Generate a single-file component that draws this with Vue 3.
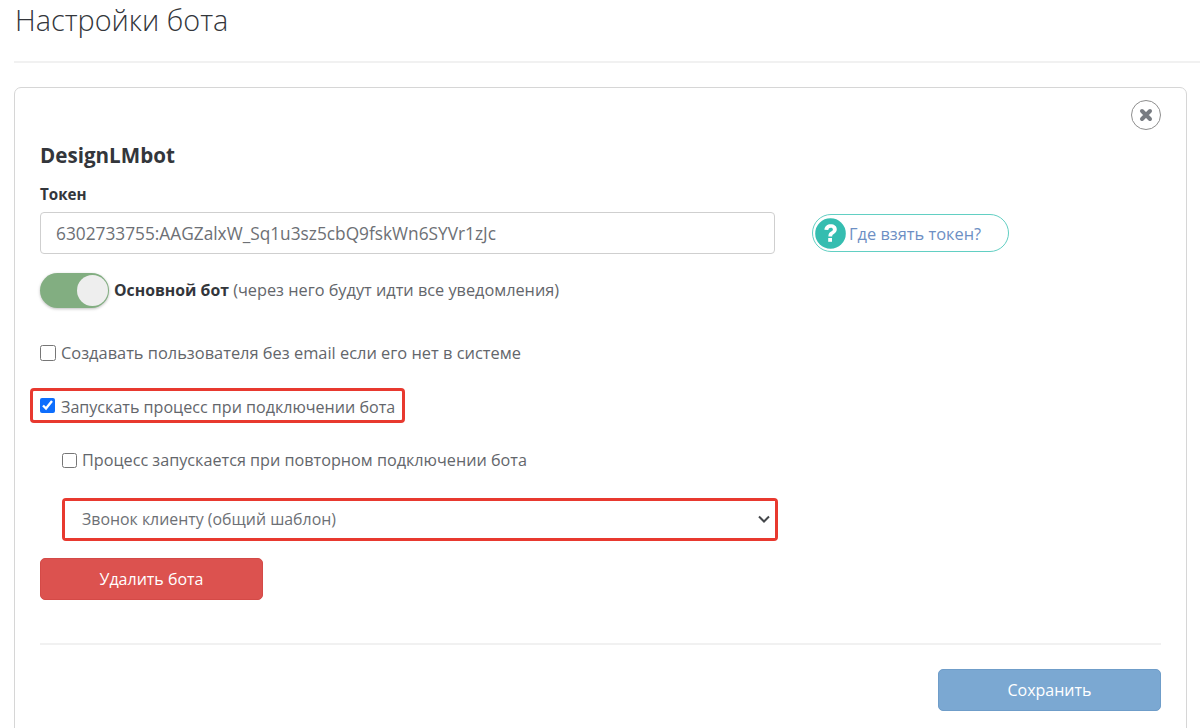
<script setup>
const token = '6302733755:AAGZalxW_Sq1u3sz5cbQ9fskWn6SYVr1zJc'
</script>

<template>
  <div class="page">
    <h1 class="title">Настройки бота</h1>
    <div class="rule"></div>
    <section class="card">
      <button class="close" type="button" aria-label="Закрыть">
        <svg width="14" height="14" viewBox="0 0 14 14"><path d="M3 3l8 8M11 3l-8 8" stroke="#787c82" stroke-width="4" stroke-linecap="round"/></svg>
      </button>
      <h2 class="bot">DesignLMbot</h2>
      <label class="field-label">Токен</label>
      <div class="token-row">
        <input class="token" :value="token" readonly />
        <a class="help">
          <span class="help-icon">
            <svg width="31" height="31" viewBox="0 0 31 31"><circle cx="15.5" cy="15.5" r="15.300" fill="#35bdb0"/><path d="M9.400 11.800c.2-3.600 2.900-5.600 6.300-5.600 3.600 0 6.100 2 6.100 5.100 0 2.400-1.300 3.600-3 4.700-1.200.8-1.600 1.300-1.600 2.500h-3.800c0-2.400.8-3.600 2.400-4.700 1.300-.9 2.100-1.400 2.100-2.400 0-1-.9-1.700-2.100-1.700-1.400 0-2.200.9-2.500 2.200z" fill="#fff"/><rect x="13.200" y="20" width="3.800" height="3.800" fill="#fff"/></svg>
          </span>
          <span>Где взять токен?</span>
        </a>
      </div>
      <div class="switch-row">
        <span class="switch"><span class="knob"></span></span>
        <span class="switch-text"><b>Основной бот</b> (через него будут идти все уведомления)</span>
      </div>
      <label class="check first"><input type="checkbox" />Создавать пользователя без email если его нет в системе</label>
      <label class="check marked"><input type="checkbox" checked /><span class="marked-text">Запускать процесс при подключении бота</span></label>
      <label class="check nested"><input type="checkbox" />Процесс запускается при повторном подключении бота</label>
      <div class="select-wrap">
        <select class="select">
          <option>Звонок клиенту (общий шаблон)</option>
        </select>
        <svg class="chev" width="12" height="8" viewBox="0 0 12 8"><path d="M1 1.500l5 5 5-5" fill="none" stroke="#44474b" stroke-width="2"/></svg>
      </div>
      <button class="btn danger" type="button">Удалить бота</button>
      <div class="rule inner"></div>
      <div class="foot">
        <button class="btn save" type="button">Сохранить</button>
      </div>
    </section>
  </div>
</template>

<style>
html, body { margin: 0; background: #fff; overflow: hidden; }
</style>

<style scoped>
.page {
  height: 728px;
  overflow: hidden;
  box-sizing: border-box;
  padding-left: 14px;
  font-family: "Open Sans", "Liberation Sans", sans-serif;
  font-size: 16.200px;
  color: #63666b;
  background: #fff;
}
.title {
  margin: 0;
  height: 61px;
  padding: 2px 0 0 1px;
  box-sizing: border-box;
  font-size: 28.800px;
  line-height: 36px;
  font-weight: 300;
  color: #33363b;
}
.rule { height: 2px; background: #f1f1f1; }
.card {
  position: relative;
  box-sizing: border-box;
  width: 1173px;
  height: 700px;
  margin-top: 24px;
  padding: 54px 25px 0;
  border: 1px solid #d6d6d6;
  border-radius: 7px;
}
.close {
  position: absolute;
  top: 12px;
  right: 25px;
  width: 30px;
  height: 30px;
  padding: 0;
  display: flex;
  align-items: center;
  justify-content: center;
  background: #fff;
  border: 1px solid #8e8e8e;
  border-radius: 50%;
}
.bot {
  margin: 0;
  font-size: 20.600px;
  line-height: 26px;
  font-weight: 700;
  color: #33363b;
}
.field-label {
  display: block;
  margin-top: 15px;
  font-size: 15.200px;
  line-height: 22px;
  font-weight: 700;
  color: #33363b;
}
.token-row { display: flex; align-items: flex-start; margin-top: 7px; }
.token {
  box-sizing: border-box;
  width: 735px;
  height: 42px;
  padding: 0 15px;
  border: 1px solid #cfcfcf;
  border-radius: 4px;
  font: inherit;
  font-size: 17.300px;
  color: #6d7075;
  outline: none;
}
.help {
  box-sizing: border-box;
  display: flex;
  align-items: center;
  gap: 3px;
  width: 197px;
  height: 38px;
  margin: 2px 0 0 37px;
  padding-left: 2px;
  border: 1.500px solid #62cfc3;
  border-radius: 19px;
  color: #6d8fc4;
  font-size: 16.400px;
}
.help-icon { display: flex; }
.switch-row { display: flex; align-items: center; margin-top: 19px; height: 35px; }
.switch {
  position: relative;
  width: 69px;
  height: 35px;
  border-radius: 18px;
  background: #82ae81;
  box-shadow: 0 1px 3px rgba(0, 0, 0, .25);
}
.knob {
  position: absolute;
  top: 2px;
  right: 1px;
  width: 31px;
  height: 31px;
  border-radius: 50%;
  background: #eee;
}
.switch-text { margin: -1px 0 0 5px; font-size: 16.300px; }
.switch-text b { color: #33363b; font-weight: 700; font-size: 15.800px; }
.check { display: flex; align-items: center; line-height: 22px; }
.check input {
  width: 15px;
  height: 15px;
  margin: 0 6px 0 0;
  accent-color: #0d6efd;
}
.first { margin-top: 34px; font-size: 16.400px; }
.first input { width: 16px; height: 16px; margin-right: 5px; }
.marked {
  box-sizing: border-box;
  width: 375px;
  height: 35px;
  margin: 24px 0 0 -10px;
  border: 3px solid #e8392f;
  border-radius: 4px;
  padding-left: 7px;
  font-size: 16.100px;
}
.marked-text { padding-top: 3px; }
.nested { margin: 26px 0 0 22px; }
.nested input { margin-right: 5px; }
.select-wrap {
  position: relative;
  box-sizing: border-box;
  width: 716px;
  height: 43px;
  margin: 27px 0 0 22px;
  border: 3px solid #e8392f;
  border-radius: 4px;
}
.select {
  box-sizing: border-box;
  display: block;
  width: 100%;
  height: 100%;
  padding: 0 17px 2px;
  appearance: none;
  border: none;
  background: #fff;
  font: inherit;
  font-size: 15.900px;
  color: #6d7075;
  outline: none;
}
.chev { position: absolute; top: 14px; right: 5px; pointer-events: none; }
.btn {
  box-sizing: border-box;
  display: block;
  width: 223px;
  height: 42px;
  border-radius: 5px;
  font: inherit;
  font-size: 16px;
  color: #fff;
}
.danger {
  margin-top: 17px;
  background: #dc524f;
  border: 1px solid #d44a47;
}
.inner { margin-top: 43px; width: 1121px; }
.foot { display: flex; justify-content: flex-end; width: 1121px; margin-top: 24px; }
.save { background: #7ba8d2; border: 1px solid #6f9dc9; }
</style>
